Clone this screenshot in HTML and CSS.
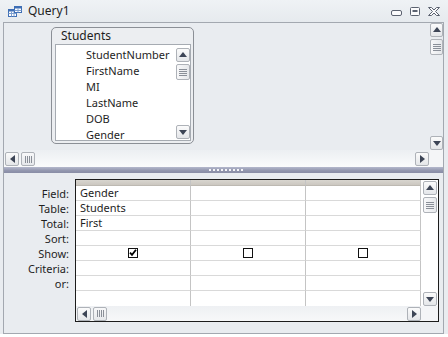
FILE: index.html
```html
<!DOCTYPE html>
<html lang="en">
<head>
  <meta charset="UTF-8">
  <title>Query1</title>
  <link rel="stylesheet" href="styles.css">
</head>
<body>

  <div class="window">

    <!-- TITLE BAR -->
    <div class="titlebar">
      <svg class="app-icon" viewBox="0 0 14 11">
        <rect x="0.5" y="3.5" width="8" height="7" fill="#fff" stroke="#3f6fb5"/>
        <rect x="0.5" y="3.5" width="8" height="2" fill="#3f6fb5"/>
        <path d="M0.5 7.5h8M3.5 5.5v5M6 5.5v5" stroke="#7d9fd0"/>
        <rect x="6.5" y="0.5" width="7" height="6" fill="#fff" stroke="#3f6fb5"/>
        <rect x="6.5" y="0.5" width="7" height="2" fill="#3f6fb5"/>
        <path d="M6.5 4.5h7M10 2.5v4" stroke="#7d9fd0"/>
      </svg>
      <span class="title">Query1</span>
      <div class="controls">
        <svg class="ctl-min" viewBox="0 0 11 6"><rect x="0.5" y="0.5" width="10" height="5" rx="1.5" fill="#fbfbfc" stroke="#5b6270"/></svg>
        <svg class="ctl-max" viewBox="0 0 10 9"><rect x="0.5" y="0.5" width="9" height="8" rx="1" fill="#fbfbfc" stroke="#5b6270"/><rect x="2.5" y="3" width="5" height="2" fill="#5b6270"/></svg>
        <svg class="ctl-close" viewBox="0 0 12 9"><path d="M0.5 0.5h3l2.5 2.5 2.5-2.5h3l-4 4 4 4h-3l-2.5-2.5-2.5 2.5h-3l4-4z" fill="#fbfbfc" stroke="#5b6270" stroke-linejoin="round"/></svg>
      </div>
    </div>

    <div class="frame">

      <!-- UPPER PANE: table field lists -->
      <div class="upper">
        <div class="canvas">
          <div class="field-list">
            <div class="fl-title">Students</div>
            <div class="fl-body">
              <ul class="fl-items">
                <li>StudentNumber</li>
                <li>FirstName</li>
                <li>MI</li>
                <li>LastName</li>
                <li>DOB</li>
                <li>Gender</li>
              </ul>
              <div class="vscroll fl-scroll">
                <div class="sb-btn up"></div>
                <div class="sb-thumb v fl-thumb"><i></i><i></i><i></i><i></i></div>
                <div class="sb-fill"></div>
                <div class="sb-btn down"></div>
              </div>
            </div>
          </div>
        </div>
        <div class="vscroll pane-v">
          <div class="sb-btn up"></div>
          <div class="sb-thumb v"><i></i><i></i><i></i><i></i></div>
          <div class="sb-fill"></div>
          <div class="sb-btn down"></div>
        </div>
        <div class="hscroll pane-h">
          <div class="sb-btn left"></div>
          <div class="sb-thumb h"><i></i><i></i><i></i><i></i></div>
          <div class="sb-fill"></div>
          <div class="sb-btn right"></div>
        </div>
        <div class="corner pane-corner"></div>
      </div>

      <!-- SPLITTER -->
      <div class="splitter"><span class="grip"></span></div>

      <!-- LOWER PANE: design grid -->
      <div class="lower">
        <div class="labels">
          <div>Field:</div>
          <div>Table:</div>
          <div>Total:</div>
          <div>Sort:</div>
          <div>Show:</div>
          <div>Criteria:</div>
          <div>or:</div>
        </div>

        <div class="qbe">
          <div class="qbe-cols">
            <div class="row sel"><div class="cell"></div><div class="cell"></div><div class="cell"></div></div>
            <div class="row"><div class="cell">Gender</div><div class="cell"></div><div class="cell"></div></div>
            <div class="row"><div class="cell">Students</div><div class="cell"></div><div class="cell"></div></div>
            <div class="row"><div class="cell">First</div><div class="cell"></div><div class="cell"></div></div>
            <div class="row"><div class="cell"></div><div class="cell"></div><div class="cell"></div></div>
            <div class="row show">
              <div class="cell"><span class="check on"><svg viewBox="0 0 8 8"><path d="M1 3.6l2 2.2 4-5" fill="none" stroke="#000" stroke-width="1.8"/></svg></span></div>
              <div class="cell"><span class="check"></span></div>
              <div class="cell"><span class="check"></span></div>
            </div>
            <div class="row"><div class="cell"></div><div class="cell"></div><div class="cell"></div></div>
            <div class="row"><div class="cell"></div><div class="cell"></div><div class="cell"></div></div>
            <div class="row last"><div class="cell"></div><div class="cell"></div><div class="cell"></div></div>
          </div>
          <div class="vscroll grid-v">
            <div class="sb-btn up"></div>
            <div class="sb-thumb v"><i></i><i></i><i></i><i></i></div>
            <div class="sb-fill"></div>
            <div class="sb-btn down"></div>
          </div>
          <div class="hscroll grid-h">
            <div class="sb-btn left"></div>
            <div class="sb-thumb h"><i></i><i></i><i></i><i></i></div>
            <div class="sb-fill"></div>
            <div class="sb-btn right"></div>
          </div>
          <div class="corner"></div>
        </div>
      </div>

    </div>
  </div>

</body>
</html>
```

FILE: styles.css
```css
* {
  box-sizing: border-box;
  margin: 0;
  padding: 0;
}

body {
  font-family: "Noto Sans", "Open Sans", sans-serif;
  font-size: 11px;
  color: #1e1e1e;
  background: #fff;
}

.window {
  width: 448px;
  height: 334px;
  background: #e9ecf0;
  display: flex;
  flex-direction: column;
}

/* title bar */
.titlebar {
  height: 22px;
  flex: none;
  display: flex;
  align-items: center;
  padding: 0 8px 0 8px;
  background: linear-gradient(#eff2f5, #e6eaee);
}

.app-icon {
  width: 14px;
  height: 11px;
  margin-right: 6px;
}

.title {
  font-size: 12px;
  line-height: 14px;
}

.controls {
  margin-left: auto;
  display: flex;
  align-items: flex-end;
  height: 9px;
}

.ctl-min {
  width: 11px;
  height: 6px;
  margin-right: 8px;
}

.ctl-max {
  width: 10px;
  height: 9px;
  margin-right: 8px;
}

.ctl-close {
  width: 12px;
  height: 9px;
}

.frame {
  flex: 1;
  margin: 0 4px 0 3px;
  border: 1px solid #a3a8b0;
  display: flex;
  flex-direction: column;
}

/* upper pane */
.upper {
  height: 144px;
  flex: none;
  display: grid;
  grid-template-columns: 1fr 13px;
  grid-template-rows: 1fr 17px;
}

.canvas {
  position: relative;
  background: #e9ecf0;
}

.field-list {
  position: absolute;
  left: 47px;
  top: 4px;
  width: 143px;
  height: 117px;
  border: 1px solid #8b8f96;
  border-radius: 5px;
  background: #eceef1;
  display: flex;
  flex-direction: column;
  padding: 0 2px 2px 3px;
}

.fl-title {
  height: 16px;
  line-height: 15px;
  padding-left: 6px;
  font-size: 12px;
}

.fl-body {
  flex: 1;
  background: #fff;
  border: 1px solid #a6abb2;
  display: flex;
  overflow: hidden;
}

.fl-items {
  flex: 1;
  list-style: none;
  padding: 2px 0 0 30px;
}

.fl-items li {
  height: 16px;
  line-height: 16px;
}

/* scrollbars */
.vscroll {
  display: flex;
  flex-direction: column;
  align-items: center;
}

.hscroll {
  display: flex;
  align-items: center;
}

.sb-fill {
  flex: 1;
}

.sb-btn {
  width: 14px;
  height: 14px;
  flex: none;
  border: 1px solid #aeb2b8;
  border-radius: 2px;
  background: linear-gradient(#fbfbfb, #e4e6e9);
  display: flex;
  align-items: center;
  justify-content: center;
}

.sb-btn::after {
  content: "";
  border: 4px solid transparent;
}

.sb-btn.up::after {
  border-bottom: 5px solid #3d4556;
  border-top-width: 0;
  margin-top: -1px;
}

.sb-btn.down::after {
  border-top: 5px solid #3d4556;
  border-bottom-width: 0;
  margin-top: 1px;
}

.sb-btn.left::after {
  border-right: 5px solid #3d4556;
  border-left-width: 0;
}

.sb-btn.right::after {
  border-left: 5px solid #3d4556;
  border-right-width: 0;
  margin-left: 1px;
}

.sb-thumb {
  flex: none;
  border: 1px solid #aeb2b8;
  border-radius: 2px;
  background: linear-gradient(90deg, #f8f8f9, #e6e8eb);
  display: flex;
  align-items: center;
  justify-content: center;
  gap: 1px;
}

.sb-thumb.v {
  width: 14px;
  height: 16px;
  flex-direction: column;
  margin-top: 2px;
}

.sb-thumb.v i {
  width: 8px;
  height: 1px;
  background: #8a8f98;
}

.sb-thumb.h {
  width: 14px;
  height: 14px;
  margin-left: 2px;
  background: linear-gradient(#f8f8f9, #e6e8eb);
}

.sb-thumb.h i {
  width: 1px;
  height: 7px;
  background: #8a8f98;
}

.pane-v {
  padding-top: 0;
  background: #e9ecf0;
}

.pane-v .sb-btn,
.pane-v .sb-thumb {
  width: 13px;
}

.pane-h {
  padding: 1px 0 0 1px;
  background: linear-gradient(#eceff2, #fafbfc);
}

.pane-h .sb-btn.right {
  margin-right: 1px;
}

.pane-corner {
  background: linear-gradient(#eceff2, #fafbfc);
}

.fl-scroll {
  width: 15px;
  padding: 3px 0 1px;
}

.fl-thumb {
  height: 22px;
  margin-top: 9px;
}

/* splitter */
.splitter {
  height: 6px;
  flex: none;
  background: linear-gradient(#b4b8cc, #9296ae 60%, #888ca5);
  display: flex;
  justify-content: center;
  align-items: center;
}

.grip {
  width: 34px;
  height: 2px;
  margin-left: 4px;
  background: repeating-linear-gradient(90deg, #f4f4f8 0 2px, transparent 2px 4px);
}

/* lower pane */
.lower {
  flex: 1;
  display: flex;
  padding-top: 6px;
  background: #e9ecf0;
}

.labels {
  width: 71px;
  padding: 7px 6px 0 0;
  text-align: right;
}

.labels div {
  height: 15px;
  line-height: 15px;
}

.qbe {
  width: 364px;
  height: 143px;
  border: 1px solid #1c1c1c;
  background: #fff;
  display: grid;
  grid-template-columns: 345px 17px;
  grid-template-rows: 126px 15px;
}

.row {
  display: grid;
  grid-template-columns: repeat(3, 115px);
  height: 15px;
}

.cell {
  border-right: 1px solid #c4c4c4;
  border-bottom: 1px solid #d9d9d9;
  padding-left: 4px;
  line-height: 14px;
}

.row.sel {
  height: 6px;
}

.row.sel .cell {
  background: linear-gradient(#d8d5cf, #cbc7c0);
  border-bottom: 1px solid #bdb9b2;
}

.row.last .cell {
  border-bottom: none;
}

.row.show .cell {
  display: flex;
  align-items: center;
  justify-content: center;
  padding-left: 0;
}

.check {
  width: 10px;
  height: 10px;
  border: 1px solid #111;
  background: #fff;
  display: flex;
}

.check svg {
  width: 8px;
  height: 8px;
}

.grid-v {
  padding: 1px 0 0 2px;
  align-items: flex-start;
}

.grid-v .sb-btn,
.grid-v .sb-thumb {
  width: 14px;
}

.grid-h {
  padding-left: 1px;
  background: linear-gradient(#eef0f3, #f7f8f9);
}

.corner {
  background: #f4f5f7;
}
```
